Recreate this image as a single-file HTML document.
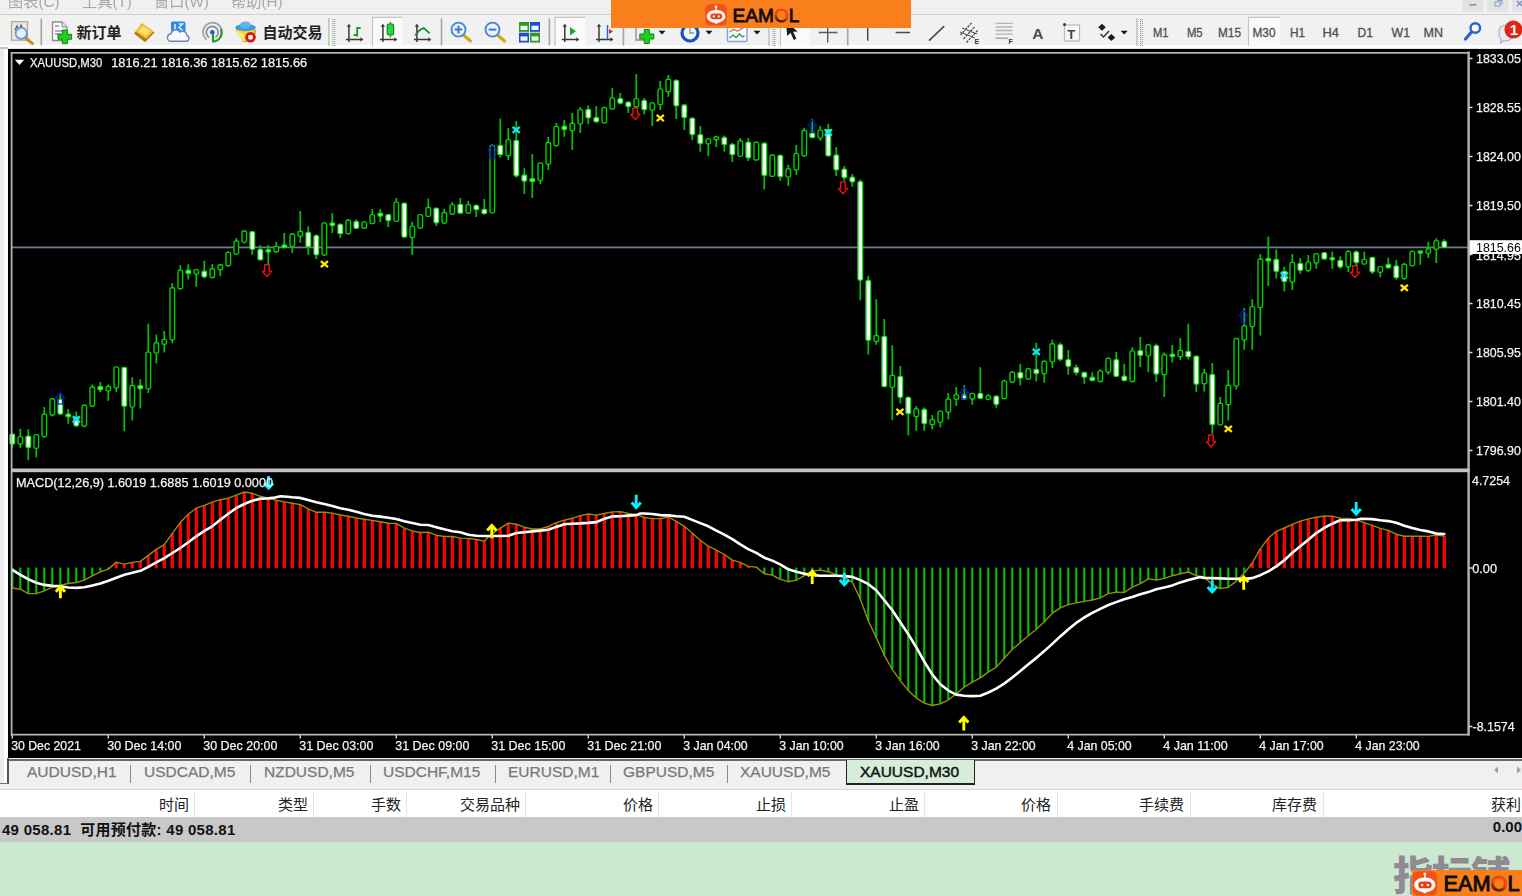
<!DOCTYPE html>
<html lang="zh"><head><meta charset="utf-8"><title>XAUUSD,M30</title>
<style>
html,body{margin:0;padding:0;background:#f0f0f0;}
body{width:1522px;height:896px;overflow:hidden;font-family:"Liberation Sans","Noto Sans CJK SC",sans-serif;}
#app{position:relative;width:1522px;height:896px;overflow:hidden;background:#f0f0f0;}
.abs{position:absolute;}
.menu{position:absolute;top:-11.5px;font-size:15.2px;color:#a8a8a8;white-space:nowrap;filter:blur(.4px);}
.tb{position:absolute;top:13.5px;left:0;width:1522px;height:32px;background:#f1f1f1;border-top:1.5px solid #cfcfcf;}
.tbt{position:absolute;top:20.8px;font-size:15px;font-weight:bold;color:#222;white-space:nowrap;letter-spacing:0px;}
.tf{position:absolute;top:26px;font-size:11.5px;color:#444;white-space:nowrap;}
.sep{position:absolute;top:19px;width:1px;height:28px;background:#a9a9a9;}
.grip{position:absolute;top:19px;width:3px;height:28px;border-left:1px dotted #999;border-right:1px dotted #999;}
.tab{position:absolute;top:763px;font-size:15.5px;color:#787878;white-space:nowrap;-webkit-text-stroke:.25px #787878;}
.tsep{position:absolute;top:765px;width:1px;height:18px;background:#8a8a8a;}
.hd{position:absolute;top:792.5px;font-size:15px;color:#222;white-space:nowrap;text-align:right;}
.hsep{position:absolute;top:791px;width:1px;height:26px;background:#e4e4e4;}
</style></head><body><div id="app">

<!-- cropped menu bar -->
<div class="menu" style="left:8px">图表(C)</div>
<div class="menu" style="left:82px">工具(T)</div>
<div class="menu" style="left:154px">窗口(W)</div>
<div class="menu" style="left:231px">帮助(H)</div>
<div class="tb"></div>
<div class="abs" style="left:0;top:45px;width:1522px;height:4px;background:#fdfdfd"></div>
<svg class="abs" style="left:0;top:0" width="1522" height="49" viewBox="0 0 1522 49" font-family="Liberation Sans, sans-serif">
<rect x="372" y="17" width="30.5" height="29" fill="#fafafa"/><path d="M372.5 46V17.4H402.5" stroke="#c4c4c4" stroke-width="1.2" fill="none"/>
<rect x="554.5" y="17" width="31" height="29" fill="#fafafa"/><path d="M555 46V17.4H585.5" stroke="#c4c4c4" stroke-width="1.2" fill="none"/>
<rect x="780" y="17" width="29.5" height="29" fill="#fafafa"/><path d="M780.5 46V17.4H809.5" stroke="#c4c4c4" stroke-width="1.2" fill="none"/>
<rect x="1248" y="17" width="32" height="29" fill="#fafafa"/><path d="M1248.5 46V17.4H1280" stroke="#c4c4c4" stroke-width="1.2" fill="none"/>
<rect x="40.5" y="18.5" width="1.6" height="27" fill="#a6a6a6"/>
<rect x="440.7" y="18.5" width="1.6" height="27" fill="#a6a6a6"/>
<rect x="548.6" y="18.5" width="1.6" height="27" fill="#a6a6a6"/>
<rect x="622.6" y="18.5" width="1.6" height="27" fill="#a6a6a6"/>
<rect x="846.9" y="18.5" width="1.6" height="27" fill="#a6a6a6"/>
<path d="M332.9 19V46M334.7 19V46" stroke="#8e8e8e" stroke-width="1" stroke-dasharray="1 1" fill="none"/>
<path d="M773 19V46M774.8 19V46" stroke="#8e8e8e" stroke-width="1" stroke-dasharray="1 1" fill="none"/>
<path d="M1140.5 19V46M1142.3 19V46" stroke="#8e8e8e" stroke-width="1" stroke-dasharray="1 1" fill="none"/>
<rect x="328.4" y="18" width="1" height="28" fill="#9db09d"/>
<rect x="768.5" y="18" width="1" height="28" fill="#9db09d"/>
<rect x="1136.5" y="18" width="1" height="28" fill="#9db09d"/>
<rect x="11.5" y="21.7" width="16" height="18.5" fill="#efe8dc" stroke="#b5a58f" stroke-width="1.2"/>
<path d="M15 30l2-4 2 5 2-6 2 4" stroke="#4a5d80" stroke-width="1.2" fill="none"/>
<path d="M25.5 38l7 5.6" stroke="#c98d1e" stroke-width="3" stroke-linecap="round"/>
<circle cx="21.2" cy="33.3" r="5.6" fill="#e6f0fc" fill-opacity=".85" stroke="#6a9bdc" stroke-width="1.8"/>
<path d="M52.5 22h9.5l5 5v13.5h-14.5z" fill="#fdfdfd" stroke="#8a8a8a" stroke-width="1.3"/><path d="M62 22v5h5" fill="#e0e0e0" stroke="#8a8a8a" stroke-width="1"/>
<path d="M55 26h4M55 31h8M55 34h6" stroke="#9a8fa8" stroke-width="1.3"/>
<path d="M62.3 30v4.3H58v5h4.3v4.3h5V39.3h4.3v-5H67.3V30z" fill="#1fd01f" stroke="#0a8a0a" stroke-width="1"/>
<path d="M134 33.5L142 23.3L154.6 32.6L145 42.3Z" fill="#b87c14"/>
<path d="M135.6 31.6L142.3 23.6L153.6 31.3L146.2 38.6Z" fill="#f6c62c"/>
<path d="M138.8 31.2L142.8 26.4L150 31.3L145.8 35.6Z" fill="#fde37c"/>
<rect x="171" y="21.5" width="14.5" height="12" rx="1.5" fill="#2d8ae6"/><path d="M175 24v7M179 24h3.5l-3.5 3.5 4 3.5" stroke="#d8ecff" stroke-width="1.6" fill="none"/>
<path d="M170.5 41.3a3.8 3.8 0 0 1 .4-7.5 5 5 0 0 1 9-1.8 4.5 4.5 0 0 1 7 3.5 3 3 0 0 1-.6 5.8z" fill="#f8fafd" stroke="#6d86b3" stroke-width="1.4"/>
<g fill="none" stroke-linecap="round"><path d="M206 39a9.5 9.5 0 1 1 12.5 .5" stroke="#9aa2ae" stroke-width="1.7"/><path d="M208.5 37a6 6 0 1 1 7.5 0" stroke="#7f8a9a" stroke-width="1.7"/><path d="M213 33v8.5" stroke="#18a018" stroke-width="2.2"/><path d="M214 41.5a9 9 0 0 0 7-12" stroke="#2a9a3a" stroke-width="2"/></g><circle cx="212.3" cy="32.2" r="2.3" fill="#2a5ad8"/>
<path d="M236 30l10-3 10 3.5-3 9-9 2.5z" fill="#f7d428" stroke="#c49a10" stroke-width="1"/><path d="M236 30l8 4 1 8-6-5z" fill="#fbe870"/>
<ellipse cx="245.5" cy="27.5" rx="10.3" ry="3.6" fill="#3f9be0"/><ellipse cx="245.5" cy="25" rx="5.5" ry="3.6" fill="#5db4ee"/>
<circle cx="250.5" cy="37.2" r="5.3" fill="#d01616"/><rect x="248.3" y="35" width="4.4" height="4.4" rx=".8" fill="#fff"/>
<path d="M348.9 25V42M345.9 39.5H361.4" stroke="#3a3a3a" stroke-width="1.5" fill="none"/><path d="M348.9 23.8l-2.2 3h4.4zM363.4 39.5l-3-2.2v4.4z" fill="#3a3a3a"/>
<path d="M357.2 27V36.5M357.2 28h3.5M353.7 35h3.5" stroke="#1c9a2c" stroke-width="1.9" fill="none"/>
<path d="M382.9 25V42M379.9 39.5H395.4" stroke="#3a3a3a" stroke-width="1.5" fill="none"/><path d="M382.9 23.8l-2.2 3h4.4zM397.4 39.5l-3-2.2v4.4z" fill="#3a3a3a"/>
<path d="M390.4 21.8V37.5" stroke="#1c9a2c" stroke-width="1.4"/><rect x="387.2" y="24" width="6.4" height="11" rx="1.5" fill="#2fd23f" stroke="#128a22" stroke-width="1.2"/>
<path d="M416.9 25V42M413.9 39.5H429.4" stroke="#3a3a3a" stroke-width="1.5" fill="none"/><path d="M416.9 23.8l-2.2 3h4.4zM431.4 39.5l-3-2.2v4.4z" fill="#3a3a3a"/>
<path d="M415.4 35.7Q418 30 423.7 28.1L429.7 33.4" stroke="#1c8a2c" stroke-width="1.8" fill="none"/>
<path d="M464 35.5l6.5 5.5" stroke="#d9a520" stroke-width="3.2" stroke-linecap="round"/>
<circle cx="458.5" cy="29.6" r="7" fill="#eaf3fd" stroke="#4c86d4" stroke-width="1.9"/>
<path d="M454.7 29.6H462.3 M458.5 25.8V33.4" stroke="#3a76cc" stroke-width="2" fill="none"/>
<path d="M498 35.5l6.5 5.5" stroke="#d9a520" stroke-width="3.2" stroke-linecap="round"/>
<circle cx="492.5" cy="29.6" r="7" fill="#eaf3fd" stroke="#4c86d4" stroke-width="1.9"/>
<path d="M488.7 29.6H496.3" stroke="#3a76cc" stroke-width="2" fill="none"/>
<rect x="519" y="22" width="10" height="9.8" fill="#2a9a1a"/><rect x="520.5" y="25.7" width="7" height="4.3" fill="#f4f8ff"/>
<rect x="530" y="22" width="10" height="9.8" fill="#1a4ed0"/><rect x="531.5" y="25.7" width="7" height="4.3" fill="#f4f8ff"/>
<rect x="519" y="32.7" width="10" height="9.8" fill="#1a4ed0"/><rect x="520.5" y="36.4" width="7" height="4.3" fill="#f4f8ff"/>
<rect x="530" y="32.7" width="10" height="9.8" fill="#2a9a1a"/><rect x="531.5" y="36.4" width="7" height="4.3" fill="#f4f8ff"/>
<path d="M564.8 25V42M561.8 39.5H577.3" stroke="#3a3a3a" stroke-width="1.5" fill="none"/><path d="M564.8 23.8l-2.2 3h4.4zM579.3 39.5l-3-2.2v4.4z" fill="#3a3a3a"/>
<path d="M570 27v8.6l6-4.3z" fill="#22a82e"/>
<path d="M599 25V42M596 39.5H611.5" stroke="#3a3a3a" stroke-width="1.5" fill="none"/><path d="M599 23.8l-2.2 3h4.4zM613.5 39.5l-3-2.2v4.4z" fill="#3a3a3a"/>
<path d="M607.5 25V39" stroke="#2a6ad0" stroke-width="1.5"/><path d="M613 31.4l-4-2.5v5z" fill="#d02a1a"/>
<path d="M636 28v12h8" stroke="#8a8a8a" stroke-width="1.3" fill="none"/>
<path d="M644.3 29.5v4.5H639.8v5h4.5v4.5h5V39h4.5v-5H649.3V29.5z" fill="#1fd01f" stroke="#0a8a0a" stroke-width="1"/>
<circle cx="690" cy="33" r="8" fill="#f4f8ff" stroke="#1c4fc0" stroke-width="3.2"/><path d="M690 27v6h4" stroke="#8a8a8a" stroke-width="1.3" fill="none"/>
<rect x="727.5" y="24" width="19.5" height="17.5" rx="1.5" fill="#f6f9ff" stroke="#86a4e0" stroke-width="1.5"/><path d="M729.5 32l4-2.5 4 1.5 7-4" stroke="#d06a4a" stroke-width="1.2" fill="none"/><path d="M729.5 38l3.5-3 3 2.5 3.5-3.5 3 3 2-1.5" stroke="#2a9a3a" stroke-width="1.3" fill="none"/>
<path d="M658.5 30.8h7l-3.5 3.8z" fill="#111"/>
<path d="M705.5 30.8h7l-3.5 3.8z" fill="#111"/>
<path d="M753.5 30.8h7l-3.5 3.8z" fill="#111"/>
<path d="M1120.7 30.8h7l-3.5 3.8z" fill="#111"/>
<path d="M785.8 21.5l1.5 14.5 3.2-3.2 3.3 7.2 2.6-1.2-3.3-7 4.5-.3z" fill="#1a1a1a"/>
<path d="M818.7 32.5H837.5M827.7 23V42.5" stroke="#5a5a5a" stroke-width="1.4"/>
<path d="M867.7 23V40.7M895.6 32.5H910" stroke="#4a4a4a" stroke-width="1.5"/>
<path d="M929 40.7L944.2 26.2" stroke="#4a4a4a" stroke-width="1.6"/>
<path d="M960.5 35l11-12M963.5 39l11-12M966.5 42.5l11-12" stroke="#4a4a4a" stroke-width="1.3" stroke-dasharray="2.5 1"/><path d="M960 32l15 6M962 28l15 6" stroke="#4a4a4a" stroke-width="1"/>
<text x="974.5" y="43.5" font-size="7px" font-weight="bold" fill="#333">E</text>
<path d="M995.5 23.3H1012.6M995.5 27H1012.6M995.5 30.5H1012.6M995.5 34.2H1012.6" stroke="#b4b4b4" stroke-width="1.3"/><path d="M995.5 38.2H1008" stroke="#9a9a9a" stroke-width="1.3"/>
<text x="1008.5" y="44" font-size="7px" font-weight="bold" fill="#333">F</text>
<text x="1032.3" y="38.5" font-size="15.5px" font-weight="bold" fill="#4a4a4a">A</text>
<rect x="1064.5" y="25" width="15" height="16" fill="#f8f8f8" stroke="#b8b8b8" stroke-width="1.2"/><circle cx="1064.5" cy="24.5" r="1.5" fill="#333"/>
<text x="1067.3" y="38.5" font-size="13px" font-weight="bold" fill="#444">T</text>
<path d="M1102 23.8l3.8 3.5-3.8 3.5-3.8-3.5zM1111.4 34l3.8 3.5-3.8 3.5-3.8-3.5z" fill="#1a1a1a"/><path d="M1100.5 34l3 3 5.5-6" stroke="#333" stroke-width="1.4" fill="none"/>
<text x="1153" y="36.9" font-size="12px" fill="#505050" stroke="#505050" stroke-width=".3" textLength="15.6" lengthAdjust="spacingAndGlyphs">M1</text>
<text x="1187" y="36.9" font-size="12px" fill="#505050" stroke="#505050" stroke-width=".3" textLength="15.6" lengthAdjust="spacingAndGlyphs">M5</text>
<text x="1218" y="36.9" font-size="12px" fill="#505050" stroke="#505050" stroke-width=".3" textLength="23" lengthAdjust="spacingAndGlyphs">M15</text>
<text x="1252.5" y="36.9" font-size="12px" fill="#505050" stroke="#505050" stroke-width=".3" textLength="23" lengthAdjust="spacingAndGlyphs">M30</text>
<text x="1290" y="36.9" font-size="12px" fill="#505050" stroke="#505050" stroke-width=".3" textLength="15" lengthAdjust="spacingAndGlyphs">H1</text>
<text x="1322.5" y="36.9" font-size="12px" fill="#505050" stroke="#505050" stroke-width=".3" textLength="16.5" lengthAdjust="spacingAndGlyphs">H4</text>
<text x="1357.5" y="36.9" font-size="12px" fill="#505050" stroke="#505050" stroke-width=".3" textLength="15.5" lengthAdjust="spacingAndGlyphs">D1</text>
<text x="1391.5" y="36.9" font-size="12px" fill="#505050" stroke="#505050" stroke-width=".3" textLength="18.5" lengthAdjust="spacingAndGlyphs">W1</text>
<text x="1423.5" y="36.9" font-size="12px" fill="#505050" stroke="#505050" stroke-width=".3" textLength="19.5" lengthAdjust="spacingAndGlyphs">MN</text>
<path d="M1471.5 32l-6 7" stroke="#2a62d2" stroke-width="3.2" stroke-linecap="round"/><circle cx="1475.3" cy="28" r="4.8" fill="#fdfdff" stroke="#2a62d2" stroke-width="2.4"/>
<path d="M1499 31a7 6 0 0 1 14 0v4a7 6 0 0 1-9 5.5l-3.5 2.5 .5-4a7 6 0 0 1-2-4z" fill="#e4ecf8" stroke="#aab4c8" stroke-width="1.2"/>
<circle cx="1513.4" cy="29.6" r="9" fill="#e22416"/><text x="1509.8" y="35" font-size="15px" font-weight="bold" fill="#fff">1</text>
<rect x="1462" y="0" width="21.5" height="12" fill="#e3e3e3"/><rect x="1487" y="0" width="21.5" height="12" fill="#e3e3e3"/><rect x="1512" y="0" width="10" height="12" fill="#e3e3e3"/>
<path d="M1469.5 4.8h7" stroke="#6f90c8" stroke-width="1.6"/><path d="M1495 2h5v4h-5zM1497 0.5h5v4" stroke="#8aa0c8" stroke-width="1.1" fill="none"/><path d="M1517 1l5 5M1522 1l-5 5" stroke="#6f90c8" stroke-width="1.4"/>
</svg>
<div class="tbt" style="left:76.5px">新订单</div>
<div class="tbt" style="left:262.5px">自动交易</div>
<!-- top orange brand bar -->
<svg class="abs" style="left:611px;top:0" width="300" height="28" viewBox="611 0 300 28"><rect x="611" y="0" width="300" height="28" fill="#f97e1c"/><g transform="translate(705.3 4.3)"><g><rect x="0" y="0" width="21.7" height="21.3" rx="5" fill="#f4501a"/><circle cx="10.8" cy="2.5" r="1.25" fill="#fff"/><rect x="10.2" y="3" width="1.2" height="3.5" fill="#fff"/><path d="M10.8 5.6C16.5 5.6 20.1 8.6 20.1 11.9C20.1 15 17 17.6 13.3 18.1L10.8 19.6L8.3 18.1C4.6 17.6 1.5 15 1.5 11.9C1.5 8.6 5.1 5.6 10.8 5.6Z" fill="#fff"/><rect x="5.1" y="9.1" width="11.8" height="5.9" rx="2.95" fill="#f23a12"/><circle cx="8.5" cy="12.1" r="1.1" fill="#fff"/><circle cx="13.5" cy="12.1" r="1.1" fill="#fff"/><defs><linearGradient id="lg1" x1="0" y1="1" x2="1" y2="0"><stop offset="0" stop-color="#111"/><stop offset=".45" stop-color="#3a1404"/><stop offset=".6" stop-color="#e8480c"/><stop offset="1" stop-color="#f0560e"/></linearGradient></defs><text x="27.3" y="17.4" font-size="19px" fill="#0d0d0d" stroke="#0d0d0d" stroke-width=".8" textLength="66.8" lengthAdjust="spacingAndGlyphs" font-family="Liberation Sans, sans-serif">EAM<tspan fill="url(#lg1)" stroke="url(#lg1)">O</tspan>L</text></g></g></svg>

<svg class="abs" style="left:8px;top:48px;filter:blur(.3px)" width="1514" height="710" viewBox="8 48 1514 710" font-family="Liberation Sans, sans-serif">
<rect x="8" y="48.9" width="1514" height="709.1" fill="#000"/>
<rect x="12" y="246.5" width="1457" height="1.8" fill="#68798c"/>
<path d="M264.7 264.8H269.3V271.2H271.6L267 276.5L262.4 271.2H264.7Z" stroke="#e01010" stroke-width="1.5" fill="none" stroke-linejoin="round"/>
<path d="M633 107.9H637.6V114.3H639.9L635.3 119.5L630.7 114.3H633Z" stroke="#e01010" stroke-width="1.5" fill="none" stroke-linejoin="round"/>
<path d="M840.7 182H845.3V188.5H847.6L843 193.8L838.4 188.5H840.7Z" stroke="#e01010" stroke-width="1.5" fill="none" stroke-linejoin="round"/>
<path d="M1208.7 435H1213.3V441.6H1215.6L1211 447L1206.4 441.6H1208.7Z" stroke="#e01010" stroke-width="1.5" fill="none" stroke-linejoin="round"/>
<path d="M1352.7 265.8H1357.3V272.3H1359.6L1355 277.6L1350.4 272.3H1352.7Z" stroke="#e01010" stroke-width="1.5" fill="none" stroke-linejoin="round"/>
<path d="M321.7 261.8L327.1 266.4M321.7 266.4L327.1 261.8" stroke="#ffea00" stroke-width="2.3" stroke-linecap="square" fill="none"/>
<path d="M657.6 115.7L663 120.3M657.6 120.3L663 115.7" stroke="#ffea00" stroke-width="2.3" stroke-linecap="square" fill="none"/>
<path d="M897.2 409.6L902.6 414.2M897.2 414.2L902.6 409.6" stroke="#ffea00" stroke-width="2.3" stroke-linecap="square" fill="none"/>
<path d="M1225.6 426.6L1231 431.2M1225.6 431.2L1231 426.6" stroke="#ffea00" stroke-width="2.3" stroke-linecap="square" fill="none"/>
<path d="M1401.6 285.5L1407 290.1M1401.6 290.1L1407 285.5" stroke="#ffea00" stroke-width="2.3" stroke-linecap="square" fill="none"/>
<path d="M12.3 432.9V434.2M12.3 444V447.7M20.3 428.8V436.6M20.3 444V447.7M28.3 429.2V436.1M28.3 447.7V459.9M36.3 434.2V434.6M36.3 448.4V457.5M44.3 407.1V414M44.3 436.6V437.8M52.3 398.1V398.8M52.3 415V416.5M60.3 392.9V399.3M60.3 414V415M68.3 409.1V414M68.3 417V423.8M76.3 411.6V417M76.3 425.8V426.8M84.3 404.7V405.2M84.3 426.3V427.3M92.3 384.6V387M92.3 406.2V407.1M100.3 382.1V386.5M100.3 390V391.9M108.3 384.6V386.5M108.3 390.9V400.8M116.3 366.4V366.9M116.3 388V391.9M124.3 366.9V367.4M124.3 406.2V431.2M132.3 377.2V385.5M132.3 407.1V420.6M140.3 379.2V385.5M140.3 389V408.6M148.3 323.7V352.1M148.3 389V392.9M156.3 334.5V342.8M156.3 353.1V363.4M164.3 331V339.4M164.3 344.3V352.6M172.3 282.9V287.8M172.3 339.9V343.3M180.3 265.2V270.1M180.3 288.8V289.3M188.3 264.2V270.1M188.3 273.6V279.5M196.3 268.7V269.6M196.3 274.1V286.8M204.3 260.8V271.2M204.3 276.9V278.2M212.3 264.1V268.8M212.3 277.5V278.5M220.3 264.1V264.8M220.3 269.8V275.9M228.3 251.2V252.4M228.3 265.8V266.5M236.3 238V241M236.3 254.1V254.8M244.3 230.3V231M244.3 242.4V243.4M252.3 231V231.7M252.3 249.4V255.1M260.3 245V249.4M260.3 259.8V260.5M268.3 245V249.7M268.3 252.1V264.1M276.3 242V246.4M276.3 251.7V252.4M284.3 233V245M284.3 247.7V248.1M292.3 233V234M292.3 246.4V253.1M300.3 210.9V231.3M300.3 236.3V242.7M308.3 226.3V232.3M308.3 246.7V254.8M316.3 234.3V235.7M316.3 254.8V259.1M324.3 222.3V222.9M324.3 255.1V255.8M332.3 213.2V222.9M332.3 225.6V233M340.3 223.6V224.3M340.3 233.7V238M348.3 218.9V220.3M348.3 233.7V234.3M356.3 219.3V221.6M356.3 228.3V229M364.3 221.3V221.9M364.3 228.3V228.6M372.3 208.9V214.6M372.3 223.6V224.3M380.3 208.9V213.2M380.3 216.3V221.9M388.3 213.9V214.6M388.3 220.6V227M396.3 197.9V202.1M396.3 221.4V221.8M404.3 202.9V203.2M404.3 237.1V237.5M412.3 221.8V226.1M412.3 237.5V255M420.3 214.3V214.6M420.3 228.2V228.6M428.3 198.6V207.5M428.3 216.4V216.8M436.3 207.9V208.2M436.3 222.9V226.1M444.3 208.9V212.5M444.3 223.2V223.6M452.3 202.1V204.6M452.3 214.3V214.6M460.3 197.9V204.3M460.3 213.2V213.6M468.3 201.1V204.6M468.3 213.2V213.6M476.3 204.6V205.4M476.3 209.6V217.1M484.3 198.9V209.3M484.3 213.6V214.6M492.3 143.9V145.4M492.3 212.9V213.2M500.3 118.6V145.4M500.3 154.6V157.5M508.3 127.9V139.6M508.3 155.7V160M516.3 121.1V140.4M516.3 175.7V177.5M524.3 168.2V175M524.3 181.1V193.9M532.3 153.9V178.6M532.3 181.4V197.9M540.3 162.5V162.9M540.3 180.4V183.9M548.3 137.1V142.5M548.3 164.3V170M556.3 122.9V126.4M556.3 145.7V146.1M564.3 120V126.1M564.3 129.6V136.8M572.3 112.9V123.2M572.3 130.7V150M580.3 107.1V109.6M580.3 123.9V132.9M588.3 105.4V109.3M588.3 117.9V123.9M596.3 106.1V117.5M596.3 121.8V122.5M604.3 107.1V107.5M604.3 122.9V123.6M612.3 87.9V97.9M612.3 108.9V109.3M620.3 92.9V98.6M620.3 103.2V104.6M628.3 101.4V102.1M628.3 106.8V112.9M636.3 73.9V98.6M636.3 106.8V107.5M644.3 97.9V100.4M644.3 109.6V114.6M652.3 102.1V102.9M652.3 110V126.1M660.3 81.1V88.9M660.3 104.6V110M668.3 75V79.3M668.3 91.8V96.8M676.3 79.6V80.4M676.3 105.7V118.9M684.3 104.6V105M684.3 117.5V130M692.3 117.5V118.2M692.3 134.6V140M700.3 126.1V134.6M700.3 143.6V151.8M708.3 138.2V138.9M708.3 143.9V156.1M716.3 135.7V136.8M716.3 139.6V147.1M724.3 135.4V137.5M724.3 144.6V151.8M732.3 142.9V144.3M732.3 154.6V162.1M740.3 137.9V140.7M740.3 156.4V156.8M748.3 137.9V142.1M748.3 157.9V161.1M756.3 141.4V142.1M756.3 160V160.4M764.3 142.5V143.2M764.3 175.4V189.6M772.3 154.6V155M772.3 176.4V176.8M780.3 154.6V155.4M780.3 176.7V180.8M788.3 164.7V168.7M788.3 177.1V186M796.3 145V153.4M796.3 169.9V174.7M804.3 127.7V130.5M804.3 155.8V156.6M812.3 118.8V132.5M812.3 137.7V138.1M820.3 126.1V130.1M820.3 138.1V141M828.3 124.1V129.7M828.3 155.8V156.6M836.3 147V155M836.3 169.9V175.9M844.3 165.9V169.1M844.3 177.5V180.8M852.3 173.9V177.1M852.3 182V186.8M860.3 179.5V181.6M860.3 280.1V300.2M868.3 276V280.5M868.3 340.4V354.4M876.3 299.3V335.5M876.3 341.6V344.8M884.3 319V336.3M884.3 386.6V387M892.3 345.2V375.3M892.3 387.4V419.9M900.3 366.1V376.5M900.3 397.4V403.5M908.3 396.6V397.4M908.3 413.5V435.6M916.3 405.9V408.7M916.3 416.7V430.8M924.3 407.5V409.5M924.3 423.6V430.8M932.3 415.1V419.5M932.3 424.8V429.6M940.3 410.7V411.1M940.3 422.4V427.6M948.3 393V399M948.3 412.3V419.5M956.3 387V394.6M956.3 399.4V405.9M964.3 385V395M964.3 399.4V399.8M972.3 393V393.4M972.3 399V404.7M980.3 367.2V393.4M980.3 398.4V398.8M988.3 394.1V395.6M988.3 399.4V400.3M996.3 395.3V396.2M996.3 404.4V407.8M1004.3 379.7V380.9M1004.3 398.8V399.1M1012.3 371.2V372.2M1012.3 382.2V383.1M1020.3 364.1V372.5M1020.3 378.1V385.6M1028.3 367.8V368.8M1028.3 379.1V380M1036.3 342.8V369.4M1036.3 373.4V381.6M1044.3 360.6V361.2M1044.3 373.8V382.8M1052.3 339.7V343.8M1052.3 361.9V367.8M1060.3 342.5V344.7M1060.3 359.4V361.2M1068.3 350V359.7M1068.3 366.2V374.7M1076.3 364.4V367.5M1076.3 372.5V375.6M1084.3 371.9V372.5M1084.3 377.2V383.8M1092.3 372.2V377.2M1092.3 380.6V380.9M1100.3 369.4V370.9M1100.3 381.6V382.5M1108.3 357.5V358.1M1108.3 372.2V374.7M1116.3 351.9V359.7M1116.3 376.2V376.6M1124.3 364.1V376.2M1124.3 380.6V380.9M1132.3 347.2V350.9M1132.3 381.6V382.5M1140.3 336.9V350.6M1140.3 355.3V366.9M1148.3 344.1V344.7M1148.3 355.9V371.9M1156.3 343.4V345.6M1156.3 374.1V381.9M1164.3 352.3V354.7M1164.3 374.9V397M1172.3 344.9V354.2M1172.3 356.7V362.6M1180.3 338V350.3M1180.3 356.7V360.1M1188.3 323.8V351.3M1188.3 356.7V359.6M1196.3 355.7V356.2M1196.3 384.2V392.1M1204.3 369V372.9M1204.3 383.7V391.6M1212.3 363.1V374.4M1212.3 424.5V433.8M1220.3 397V403.3M1220.3 425V425.4M1228.3 370V385.2M1228.3 404.8V420.5M1236.3 338V338.5M1236.3 386.2V389.6M1244.3 308.1V325.8M1244.3 340V349.8M1252.3 299.2V306.6M1252.3 326.7V349.8M1260.3 254.1V259M1260.3 307.6V335.6M1268.3 236.4V258.5M1268.3 260.9V286M1276.3 249.6V259.5M1276.3 271.3V278.6M1284.3 266.8V271.3M1284.3 281.6V291.4M1292.3 254.1V262.4M1292.3 282.1V289.9M1300.3 258V263.4M1300.3 270.3V273.7M1308.3 255V261.9M1308.3 270.8V271.7M1316.3 252.9V253.6M1316.3 263V268.8M1324.3 252.3V252.7M1324.3 259V259.6M1332.3 251.8V257.7M1332.3 259.9V268.8M1340.3 256.3V260.3M1340.3 267V268.8M1348.3 250V251.4M1348.3 266.8V271.9M1356.3 250.5V251.8M1356.3 262.5V265.2M1364.3 251.8V259.4M1364.3 264.1V264.5M1372.3 256.9V257.4M1372.3 271.9V273.7M1380.3 265.9V266.6M1380.3 272.4V277.3M1388.3 257.8V264.3M1388.3 267.9V268.6M1396.3 260.1V265.9M1396.3 277.7V279.7M1404.3 263V264.3M1404.3 278.6V279.7M1412.3 250.5V251.4M1412.3 265.9V266.3M1420.3 250.9V251M1420.3 253.2V264.8M1428.3 242V248.7M1428.3 253.4V258.1M1436.3 238.2V240.6M1436.3 249.3V263M1444.3 239.3V241.3M1444.3 247.3V247.8" stroke="#00c400" stroke-width="1.75" fill="none"/>
<g stroke="#00d200" stroke-width="1.4" fill="#000"><rect x="18" y="436.6" width="4.6" height="7.4" rx="1.6"/><rect x="34" y="434.6" width="4.6" height="13.8" rx="1.6"/><rect x="42" y="414" width="4.6" height="22.6" rx="1.6"/><rect x="50" y="398.8" width="4.6" height="16.2" rx="1.6"/><rect x="82" y="405.2" width="4.6" height="21.1" rx="1.6"/><rect x="90" y="387" width="4.6" height="19.2" rx="1.6"/><rect x="106" y="386.5" width="4.6" height="4.4" rx="1.6"/><rect x="114" y="366.9" width="4.6" height="21.1" rx="1.6"/><rect x="130" y="385.5" width="4.6" height="21.6" rx="1.6"/><rect x="146" y="352.1" width="4.6" height="36.8" rx="1.6"/><rect x="154" y="342.8" width="4.6" height="10.3" rx="1.6"/><rect x="162" y="339.4" width="4.6" height="4.9" rx="1.6"/><rect x="170" y="287.8" width="4.6" height="52.1" rx="1.6"/><rect x="178" y="270.1" width="4.6" height="18.7" rx="1.6"/><rect x="194" y="269.6" width="4.6" height="4.4" rx="1.6"/><rect x="210" y="268.8" width="4.6" height="8.7" rx="1.6"/><rect x="218" y="264.8" width="4.6" height="5" rx="1.6"/><rect x="226" y="252.4" width="4.6" height="13.4" rx="1.6"/><rect x="234" y="241" width="4.6" height="13.1" rx="1.6"/><rect x="242" y="231" width="4.6" height="11.4" rx="1.6"/><rect x="274" y="246.4" width="4.6" height="5.4" rx="1.6"/><rect x="290" y="234" width="4.6" height="12.4" rx="1.6"/><rect x="298" y="231.3" width="4.6" height="5" rx="1.6"/><rect x="322" y="222.9" width="4.6" height="32.1" rx="1.6"/><rect x="346" y="220.3" width="4.6" height="13.4" rx="1.6"/><rect x="362" y="221.9" width="4.6" height="6.4" rx="1.6"/><rect x="370" y="214.6" width="4.6" height="9" rx="1.6"/><rect x="394" y="202.1" width="4.6" height="19.3" rx="1.6"/><rect x="410" y="226.1" width="4.6" height="11.4" rx="1.6"/><rect x="418" y="214.6" width="4.6" height="13.6" rx="1.6"/><rect x="426" y="207.5" width="4.6" height="8.9" rx="1.6"/><rect x="442" y="212.5" width="4.6" height="10.7" rx="1.6"/><rect x="450" y="204.6" width="4.6" height="9.6" rx="1.6"/><rect x="466" y="204.6" width="4.6" height="8.6" rx="1.6"/><rect x="490" y="145.4" width="4.6" height="67.5" rx="1.6"/><rect x="506" y="139.6" width="4.6" height="16.1" rx="1.6"/><rect x="538" y="162.9" width="4.6" height="17.5" rx="1.6"/><rect x="546" y="142.5" width="4.6" height="21.8" rx="1.6"/><rect x="554" y="126.4" width="4.6" height="19.3" rx="1.6"/><rect x="570" y="123.2" width="4.6" height="7.5" rx="1.6"/><rect x="578" y="109.6" width="4.6" height="14.3" rx="1.6"/><rect x="602" y="107.5" width="4.6" height="15.4" rx="1.6"/><rect x="610" y="97.9" width="4.6" height="11.1" rx="1.6"/><rect x="634" y="98.6" width="4.6" height="8.2" rx="1.6"/><rect x="650" y="102.9" width="4.6" height="7.1" rx="1.6"/><rect x="658" y="88.9" width="4.6" height="15.7" rx="1.6"/><rect x="666" y="79.3" width="4.6" height="12.5" rx="1.6"/><rect x="706" y="138.9" width="4.6" height="5" rx="1.6"/><rect x="714" y="136.8" width="4.6" height="2.9" rx="1.6"/><rect x="738" y="140.7" width="4.6" height="15.7" rx="1.6"/><rect x="754" y="142.1" width="4.6" height="17.9" rx="1.6"/><rect x="770" y="155" width="4.6" height="21.4" rx="1.6"/><rect x="786" y="168.7" width="4.6" height="8.4" rx="1.6"/><rect x="794" y="153.4" width="4.6" height="16.5" rx="1.6"/><rect x="802" y="130.5" width="4.6" height="25.3" rx="1.6"/><rect x="818" y="130.1" width="4.6" height="8" rx="1.6"/><rect x="874" y="335.5" width="4.6" height="6" rx="1.6"/><rect x="890" y="375.3" width="4.6" height="12.1" rx="1.6"/><rect x="914" y="408.7" width="4.6" height="8" rx="1.6"/><rect x="930" y="419.5" width="4.6" height="5.2" rx="1.6"/><rect x="938" y="411.1" width="4.6" height="11.3" rx="1.6"/><rect x="946" y="399" width="4.6" height="13.3" rx="1.6"/><rect x="954" y="394.6" width="4.6" height="4.8" rx="1.6"/><rect x="970" y="393.4" width="4.6" height="5.6" rx="1.6"/><rect x="986" y="395.6" width="4.6" height="3.8" rx="1.6"/><rect x="1002" y="380.9" width="4.6" height="17.8" rx="1.6"/><rect x="1010" y="372.2" width="4.6" height="10" rx="1.6"/><rect x="1026" y="368.8" width="4.6" height="10.3" rx="1.6"/><rect x="1042" y="361.2" width="4.6" height="12.5" rx="1.6"/><rect x="1050" y="343.8" width="4.6" height="18.1" rx="1.6"/><rect x="1098" y="370.9" width="4.6" height="10.6" rx="1.6"/><rect x="1106" y="358.1" width="4.6" height="14.1" rx="1.6"/><rect x="1130" y="350.9" width="4.6" height="30.6" rx="1.6"/><rect x="1146" y="344.7" width="4.6" height="11.2" rx="1.6"/><rect x="1162" y="354.7" width="4.6" height="20.1" rx="1.6"/><rect x="1178" y="350.3" width="4.6" height="6.4" rx="1.6"/><rect x="1202" y="372.9" width="4.6" height="10.8" rx="1.6"/><rect x="1218" y="403.3" width="4.6" height="21.6" rx="1.6"/><rect x="1226" y="385.2" width="4.6" height="19.6" rx="1.6"/><rect x="1234" y="338.5" width="4.6" height="47.6" rx="1.6"/><rect x="1242" y="325.8" width="4.6" height="14.2" rx="1.6"/><rect x="1250" y="306.6" width="4.6" height="20.1" rx="1.6"/><rect x="1258" y="259" width="4.6" height="48.6" rx="1.6"/><rect x="1290" y="262.4" width="4.6" height="19.6" rx="1.6"/><rect x="1306" y="261.9" width="4.6" height="8.8" rx="1.6"/><rect x="1314" y="253.6" width="4.6" height="9.4" rx="1.6"/><rect x="1346" y="251.4" width="4.6" height="15.4" rx="1.6"/><rect x="1362" y="259.4" width="4.6" height="4.7" rx="1.6"/><rect x="1378" y="266.6" width="4.6" height="5.8" rx="1.6"/><rect x="1402" y="264.3" width="4.6" height="14.3" rx="1.6"/><rect x="1410" y="251.4" width="4.6" height="14.5" rx="1.6"/><rect x="1426" y="248.7" width="4.6" height="4.7" rx="1.6"/><rect x="1434" y="240.6" width="4.6" height="8.7" rx="1.6"/></g>
<g stroke="#19e619" stroke-width="1.3" fill="#fff"><rect x="10" y="434.2" width="4.6" height="9.8" rx="1.3"/><rect x="26" y="436.1" width="4.6" height="11.5" rx="1.3"/><rect x="58" y="399.3" width="4.6" height="14.7" rx="1.3"/><rect x="74" y="417" width="4.6" height="8.8" rx="1.3"/><rect x="122" y="367.4" width="4.6" height="38.8" rx="1.3"/><rect x="202" y="271.2" width="4.6" height="5.7" rx="1.3"/><rect x="250" y="231.7" width="4.6" height="17.7" rx="1.3"/><rect x="258" y="249.4" width="4.6" height="10.4" rx="1.3"/><rect x="306" y="232.3" width="4.6" height="14.4" rx="1.3"/><rect x="314" y="235.7" width="4.6" height="19.1" rx="1.3"/><rect x="338" y="224.3" width="4.6" height="9.4" rx="1.3"/><rect x="354" y="221.6" width="4.6" height="6.7" rx="1.3"/><rect x="386" y="214.6" width="4.6" height="6" rx="1.3"/><rect x="402" y="203.2" width="4.6" height="33.9" rx="1.3"/><rect x="434" y="208.2" width="4.6" height="14.6" rx="1.3"/><rect x="458" y="204.3" width="4.6" height="8.9" rx="1.3"/><rect x="474" y="205.4" width="4.6" height="4.3" rx="1.3"/><rect x="482" y="209.3" width="4.6" height="4.3" rx="1.3"/><rect x="498" y="145.4" width="4.6" height="9.3" rx="1.3"/><rect x="514" y="140.4" width="4.6" height="35.4" rx="1.3"/><rect x="522" y="175" width="4.6" height="6.1" rx="1.3"/><rect x="586" y="109.3" width="4.6" height="8.6" rx="1.3"/><rect x="594" y="117.5" width="4.6" height="4.3" rx="1.3"/><rect x="618" y="98.6" width="4.6" height="4.6" rx="1.3"/><rect x="626" y="102.1" width="4.6" height="4.6" rx="1.3"/><rect x="642" y="100.4" width="4.6" height="9.3" rx="1.3"/><rect x="674" y="80.4" width="4.6" height="25.4" rx="1.3"/><rect x="682" y="105" width="4.6" height="12.5" rx="1.3"/><rect x="690" y="118.2" width="4.6" height="16.4" rx="1.3"/><rect x="698" y="134.6" width="4.6" height="8.9" rx="1.3"/><rect x="722" y="137.5" width="4.6" height="7.1" rx="1.3"/><rect x="730" y="144.3" width="4.6" height="10.4" rx="1.3"/><rect x="746" y="142.1" width="4.6" height="15.7" rx="1.3"/><rect x="762" y="143.2" width="4.6" height="32.1" rx="1.3"/><rect x="778" y="155.4" width="4.6" height="21.3" rx="1.3"/><rect x="810" y="132.5" width="4.6" height="5.2" rx="1.3"/><rect x="826" y="129.7" width="4.6" height="26.1" rx="1.3"/><rect x="834" y="155" width="4.6" height="14.9" rx="1.3"/><rect x="842" y="169.1" width="4.6" height="8.4" rx="1.3"/><rect x="850" y="177.1" width="4.6" height="4.8" rx="1.3"/><rect x="858" y="181.6" width="4.6" height="98.5" rx="1.3"/><rect x="866" y="280.5" width="4.6" height="59.9" rx="1.3"/><rect x="882" y="336.3" width="4.6" height="50.3" rx="1.3"/><rect x="898" y="376.5" width="4.6" height="20.9" rx="1.3"/><rect x="906" y="397.4" width="4.6" height="16.1" rx="1.3"/><rect x="922" y="409.5" width="4.6" height="14.1" rx="1.3"/><rect x="962" y="395" width="4.6" height="4.4" rx="1.3"/><rect x="978" y="393.4" width="4.6" height="5" rx="1.3"/><rect x="994" y="396.2" width="4.6" height="8.1" rx="1.3"/><rect x="1018" y="372.5" width="4.6" height="5.6" rx="1.3"/><rect x="1034" y="369.4" width="4.6" height="4.1" rx="1.3"/><rect x="1058" y="344.7" width="4.6" height="14.7" rx="1.3"/><rect x="1066" y="359.7" width="4.6" height="6.6" rx="1.3"/><rect x="1074" y="367.5" width="4.6" height="5" rx="1.3"/><rect x="1082" y="372.5" width="4.6" height="4.7" rx="1.3"/><rect x="1114" y="359.7" width="4.6" height="16.6" rx="1.3"/><rect x="1122" y="376.2" width="4.6" height="4.4" rx="1.3"/><rect x="1138" y="350.6" width="4.6" height="4.7" rx="1.3"/><rect x="1154" y="345.6" width="4.6" height="28.4" rx="1.3"/><rect x="1186" y="351.3" width="4.6" height="5.4" rx="1.3"/><rect x="1194" y="356.2" width="4.6" height="28" rx="1.3"/><rect x="1210" y="374.4" width="4.6" height="50.1" rx="1.3"/><rect x="1274" y="259.5" width="4.6" height="11.8" rx="1.3"/><rect x="1282" y="271.3" width="4.6" height="10.3" rx="1.3"/><rect x="1298" y="263.4" width="4.6" height="6.9" rx="1.3"/><rect x="1322" y="252.7" width="4.6" height="6.3" rx="1.3"/><rect x="1338" y="260.3" width="4.6" height="6.7" rx="1.3"/><rect x="1354" y="251.8" width="4.6" height="10.7" rx="1.3"/><rect x="1370" y="257.4" width="4.6" height="14.5" rx="1.3"/><rect x="1394" y="265.9" width="4.6" height="11.8" rx="1.3"/><rect x="1442" y="241.3" width="4.6" height="6" rx="1.3"/></g>
<g stroke="#10dc10" stroke-width="1.3" fill="#8cf58c"><rect x="66" y="414" width="4.6" height="2.9" rx="1.1"/><rect x="98" y="386.5" width="4.6" height="3.4" rx="1.1"/><rect x="138" y="385.5" width="4.6" height="3.4" rx="1.1"/><rect x="186" y="270.1" width="4.6" height="3.4" rx="1.1"/><rect x="266" y="249.7" width="4.6" height="2.3" rx="1.1"/><rect x="282" y="245" width="4.6" height="2.7" rx="1.1"/><rect x="330" y="222.9" width="4.6" height="2.7" rx="1.1"/><rect x="378" y="213.2" width="4.6" height="3" rx="1.1"/><rect x="530" y="178.6" width="4.6" height="2.9" rx="1.1"/><rect x="562" y="126.1" width="4.6" height="3.6" rx="1.1"/><rect x="1090" y="377.2" width="4.6" height="3.4" rx="1.1"/><rect x="1170" y="354.2" width="4.6" height="2.5" rx="1.1"/><rect x="1266" y="258.5" width="4.6" height="2.5" rx="1.1"/><rect x="1330" y="257.7" width="4.6" height="2.2" rx="1.1"/><rect x="1386" y="264.3" width="4.6" height="3.6" rx="1.1"/><rect x="1418" y="251" width="4.6" height="2.2" rx="1.1"/></g>
<path d="M73.6 417.1L79 421.7M73.6 421.7L79 417.1" stroke="#10e8f0" stroke-width="2.3" stroke-linecap="square" fill="none"/>
<path d="M513.5 127.5L518.9 132.1M513.5 132.1L518.9 127.5" stroke="#10e8f0" stroke-width="2.3" stroke-linecap="square" fill="none"/>
<path d="M825.6 130.2L831 134.8M825.6 134.8L831 130.2" stroke="#10e8f0" stroke-width="2.3" stroke-linecap="square" fill="none"/>
<path d="M1033.6 349.6L1039 354.2M1033.6 354.2L1039 349.6" stroke="#10e8f0" stroke-width="2.3" stroke-linecap="square" fill="none"/>
<path d="M1281.6 273.1L1287 277.7M1281.6 277.7L1287 273.1" stroke="#10e8f0" stroke-width="2.3" stroke-linecap="square" fill="none"/>
<g opacity=".8"><path d="M58.1 404H62.5V397.9H64.7L60.3 393L55.9 397.9H58.1Z" stroke="#0a12d8" stroke-width="1.5" fill="none" stroke-linejoin="round"/></g>
<g opacity=".8"><path d="M490.1 158.2H494.5V150.9H496.7L492.3 145L487.9 150.9H490.1Z" stroke="#0a12d8" stroke-width="1.5" fill="none" stroke-linejoin="round"/></g>
<g opacity=".8"><path d="M810.1 132.5H814.5V125.6H816.7L812.3 120L807.9 125.6H810.1Z" stroke="#0a12d8" stroke-width="1.5" fill="none" stroke-linejoin="round"/></g>
<g opacity=".8"><path d="M962.1 399H966.5V392.7H968.7L964.3 387.5L959.9 392.7H962.1Z" stroke="#0a12d8" stroke-width="1.5" fill="none" stroke-linejoin="round"/></g>
<g opacity=".8"><path d="M1241.3 322.5H1245.7V315.6H1247.9L1243.5 310L1239.1 315.6H1241.3Z" stroke="#0a12d8" stroke-width="1.5" fill="none" stroke-linejoin="round"/></g>
<path d="M116.3 567.9V562.1M124.3 567.9V564.1M132.3 567.9V562.4M140.3 567.9V561.4M148.3 567.9V555.4M156.3 567.9V549.4M164.3 567.9V544.7M172.3 567.9V533.3M180.3 567.9V522.6M188.3 567.9V514.2M196.3 567.9V508.2M204.3 567.9V505.4M212.3 567.9V502.2M220.3 567.9V499.7M228.3 567.9V498.1M236.3 567.9V495.2M244.3 567.9V492M252.3 567.9V493.3M260.3 567.9V496.3M268.3 567.9V498.1M276.3 567.9V500.3M284.3 567.9V501.9M292.3 567.9V503.2M300.3 567.9V504.6M308.3 567.9V508.8M316.3 567.9V512.3M324.3 567.9V512.3M332.3 567.9V513.1M340.3 567.9V515M348.3 567.9V516.3M356.3 567.9V518M364.3 567.9V519.3M372.3 567.9V520.4M380.3 567.9V521.7M388.3 567.9V523.3M396.3 567.9V523.4M404.3 567.9V528.2M412.3 567.9V530.9M420.3 567.9V532.5M428.3 567.9V532.2M436.3 567.9V535.2M444.3 567.9V536.5M452.3 567.9V536.5M460.3 567.9V538.1M468.3 567.9V538.4M476.3 567.9V539.5M484.3 567.9V541.1M492.3 567.9V533.6M500.3 567.9V528.2M508.3 567.9V523.1M516.3 567.9V524.2M524.3 567.9V527.2M532.3 567.9V529M540.3 567.9V529M548.3 567.9V526.3M556.3 567.9V522.6M564.3 567.9V520.2M572.3 567.9V518.3M580.3 567.9V515.6M588.3 567.9V514M596.3 567.9V515.1M604.3 567.9V513.5M612.3 567.9V511.9M620.3 567.9V511.6M628.3 567.9V513.5M636.3 567.9V514.6M644.3 567.9V517.5M652.3 567.9V518.6M660.3 567.9V518.6M668.3 567.9V517M676.3 567.9V521.3M684.3 567.9V526.3M692.3 567.9V533.3M700.3 567.9V540.3M708.3 567.9V546.2M716.3 567.9V550.2M724.3 567.9V554.5M732.3 567.9V560.1M740.3 567.9V562.3M748.3 567.9V566.4M756.3 567.9V567.1M1252.3 567.9V563M1260.3 567.9V548.9M1268.3 567.9V538.2M1276.3 567.9V531.3M1284.3 567.9V528M1292.3 567.9V524.3M1300.3 567.9V521.1M1308.3 567.9V518.9M1316.3 567.9V517.3M1324.3 567.9V516M1332.3 567.9V516.1M1340.3 567.9V518.1M1348.3 567.9V518.5M1356.3 567.9V520.1M1364.3 567.9V522.6M1372.3 567.9V525.4M1380.3 567.9V528.4M1388.3 567.9V530.4M1396.3 567.9V534.2M1404.3 567.9V536.2M1412.3 567.9V536.2M1420.3 567.9V536.2M1428.3 567.9V536.4M1436.3 567.9V535M1444.3 567.9V536" stroke="#ff0000" stroke-width="3.2" fill="none"/>
<path d="M12.3 567.6V588M20.3 567.6V589.2M28.3 567.6V593.6M36.3 567.6V593.6M44.3 567.6V590.9M52.3 567.6V587.2M60.3 567.6V585.2M68.3 567.6V583.5M76.3 567.6V582.5M84.3 567.6V580.2M92.3 567.6V575.8M100.3 567.6V571.8M108.3 567.6V569.1M764.3 567.6V573.8M772.3 567.6V575.1M780.3 567.6V579.3M788.3 567.6V581.7M796.3 567.6V580.1M804.3 567.6V575.7M812.3 567.6V570.9M820.3 567.6V570.1M828.3 567.6V571.7M836.3 567.6V574.9M844.3 567.6V577.3M852.3 567.6V582.1M860.3 567.6V599M868.3 567.6V620.7M876.3 567.6V637.6M884.3 567.6V655.3M892.3 567.6V669.3M900.3 567.6V680.6M908.3 567.6V690.6M916.3 567.6V697.9M924.3 567.6V703.1M932.3 567.6V705.5M940.3 567.6V703.9M948.3 567.6V699.9M956.3 567.6V693.8M964.3 567.6V687M972.3 567.6V682.1M980.3 567.6V677.9M988.3 567.6V672.1M996.3 567.6V667.1M1004.3 567.6V658.2M1012.3 567.6V649.3M1020.3 567.6V642.5M1028.3 567.6V635.7M1036.3 567.6V629.3M1044.3 567.6V621.8M1052.3 567.6V613.2M1060.3 567.6V607.9M1068.3 567.6V604.6M1076.3 567.6V602.9M1084.3 567.6V601.4M1092.3 567.6V600M1100.3 567.6V597.9M1108.3 567.6V593.6M1116.3 567.6V592.1M1124.3 567.6V592.5M1132.3 567.6V587.1M1140.3 567.6V583.6M1148.3 567.6V578.9M1156.3 567.6V580M1164.3 567.6V578.4M1172.3 567.6V575.7M1180.3 567.6V573.7M1188.3 567.6V572M1196.3 567.6V575.7M1204.3 567.6V577.3M1212.3 567.6V584.4M1220.3 567.6V588.6M1228.3 567.6V587.3M1236.3 567.6V581.1M1244.3 567.6V573.1" stroke="#00b400" stroke-width="2.3" fill="none"/>
<polyline points="12.3,588 20.3,589.2 28.3,593.6 36.3,593.6 44.3,590.9 52.3,587.2 60.3,585.2 68.3,583.5 76.3,582.5 84.3,580.2 92.3,575.8 100.3,571.8 108.3,569.1 116.3,562.1 124.3,564.1 132.3,562.4 140.3,561.4 148.3,555.4 156.3,549.4 164.3,544.7 172.3,533.3 180.3,522.6 188.3,514.2 196.3,508.2 204.3,505.4 212.3,502.2 220.3,499.7 228.3,498.1 236.3,495.2 244.3,492 252.3,493.3 260.3,496.3 268.3,498.1 276.3,500.3 284.3,501.9 292.3,503.2 300.3,504.6 308.3,508.8 316.3,512.3 324.3,512.3 332.3,513.1 340.3,515 348.3,516.3 356.3,518 364.3,519.3 372.3,520.4 380.3,521.7 388.3,523.3 396.3,523.4 404.3,528.2 412.3,530.9 420.3,532.5 428.3,532.2 436.3,535.2 444.3,536.5 452.3,536.5 460.3,538.1 468.3,538.4 476.3,539.5 484.3,541.1 492.3,533.6 500.3,528.2 508.3,523.1 516.3,524.2 524.3,527.2 532.3,529 540.3,529 548.3,526.3 556.3,522.6 564.3,520.2 572.3,518.3 580.3,515.6 588.3,514 596.3,515.1 604.3,513.5 612.3,511.9 620.3,511.6 628.3,513.5 636.3,514.6 644.3,517.5 652.3,518.6 660.3,518.6 668.3,517 676.3,521.3 684.3,526.3 692.3,533.3 700.3,540.3 708.3,546.2 716.3,550.2 724.3,554.5 732.3,560.1 740.3,562.3 748.3,566.4 756.3,567.1 764.3,573.8 772.3,575.1 780.3,579.3 788.3,581.7 796.3,580.1 804.3,575.7 812.3,570.9 820.3,570.1 828.3,571.7 836.3,574.9 844.3,577.3 852.3,582.1 860.3,599 868.3,620.7 876.3,637.6 884.3,655.3 892.3,669.3 900.3,680.6 908.3,690.6 916.3,697.9 924.3,703.1 932.3,705.5 940.3,703.9 948.3,699.9 956.3,693.8 964.3,687 972.3,682.1 980.3,677.9 988.3,672.1 996.3,667.1 1004.3,658.2 1012.3,649.3 1020.3,642.5 1028.3,635.7 1036.3,629.3 1044.3,621.8 1052.3,613.2 1060.3,607.9 1068.3,604.6 1076.3,602.9 1084.3,601.4 1092.3,600 1100.3,597.9 1108.3,593.6 1116.3,592.1 1124.3,592.5 1132.3,587.1 1140.3,583.6 1148.3,578.9 1156.3,580 1164.3,578.4 1172.3,575.7 1180.3,573.7 1188.3,572 1196.3,575.7 1204.3,577.3 1212.3,584.4 1220.3,588.6 1228.3,587.3 1236.3,581.1 1244.3,573.1 1252.3,563 1260.3,548.9 1268.3,538.2 1276.3,531.3 1284.3,528 1292.3,524.3 1300.3,521.1 1308.3,518.9 1316.3,517.3 1324.3,516 1332.3,516.1 1340.3,518.1 1348.3,518.5 1356.3,520.1 1364.3,522.6 1372.3,525.4 1380.3,528.4 1388.3,530.4 1396.3,534.2 1404.3,536.2 1412.3,536.2 1420.3,536.2 1428.3,536.4 1436.3,535 1444.3,536" stroke="#9a8e00" stroke-width="1.4" fill="none" stroke-linejoin="round"/>
<polyline points="12.4,569.8 20.4,574.8 28.3,579.2 36.3,582.8 44.3,584.9 52.4,585.9 60.4,586.2 68.3,587.5 76.3,587.9 84.3,587.2 92.4,585.5 100.4,583.5 108.5,580.8 116.3,577.8 124.4,574.8 132.4,572.8 140.4,570.8 148.3,566.8 156.3,562.4 164.4,558.1 172.4,553 180.4,548 188.3,542.3 196.3,536.3 204.4,530.9 212.3,526.3 220.4,519.8 228.3,513.7 236.3,508 244.3,504 252.2,500.8 260.3,498.7 268.3,498.4 275,497.6 280.4,496.3 284.3,496.5 292.3,497.3 300.3,497.9 308.2,500 316.3,502.2 324.3,504 332.4,505.9 340.3,508.3 348.3,509.7 356.3,511.8 364.2,513.9 372.3,515.8 380.3,516.6 388.3,517.7 396.2,519 404.3,521.3 412.4,523.1 420.3,524.7 428.3,525 436.3,527.2 444.2,529.3 452.3,531.2 460.3,532.2 468.4,534.7 476.3,535.7 484.3,536 492.3,536 500.2,536 508.3,535.7 516.3,533 524.4,532.2 532.3,531.4 540.3,530.6 548.3,529.8 556.2,526.9 564.3,524.2 572.3,523.7 580.3,523.4 588.2,522.9 596.3,522.1 604.4,518.8 612.3,516.4 620.3,516.2 628.3,515.6 636.2,515.1 640.3,513.5 644.3,513.5 652.3,514 660.4,515.1 668.3,515.4 676.3,516.2 684.3,516.7 692.2,519.9 700.3,523.1 708.3,526.3 716.4,530.6 724.3,534.7 732.3,539.2 740.3,544.3 748.2,549.1 756.3,552.9 764.3,557.7 772.3,560.6 780.2,564.4 788.3,569.3 796.3,571.7 804.3,573.7 812.4,574.9 820.2,575.7 828.2,575.7 836.3,575.7 844.3,576.1 852.3,576.9 860.4,580.1 868.4,584.2 876.2,590.2 884.3,600.2 892.3,610.3 900.3,622.3 908.4,634.4 916.2,647.2 924.3,661.7 932.3,674.5 940.3,684.2 948.4,690.6 956.2,694.6 964.2,695.8 972.3,696.1 980.3,695.7 988.4,692.5 996.2,688.6 1004.2,683.6 1012.3,677.5 1020.3,671.1 1028.4,664.3 1036.2,657.9 1044.2,651.1 1052.3,643.9 1060.3,636.4 1068.4,629.3 1076.2,622.9 1084.2,617.5 1092.3,612.9 1100.3,608.9 1108.4,605 1116.2,602.1 1124.2,599.3 1132.3,597.1 1140.3,594.3 1148.4,592.1 1156.2,589.3 1164.2,587.5 1172.3,585.4 1180.4,582.4 1188.3,580 1196.3,577.9 1200.2,577.1 1204.3,577.9 1212.2,578.1 1220.3,578.4 1228.3,578.7 1236.4,578.7 1244.3,578.9 1252.3,578.1 1260.3,575.2 1268.2,571.4 1276.3,566.4 1284.3,560.2 1292.4,552.7 1300.3,546.3 1308.3,539.8 1316.3,533.1 1324.2,527.8 1332.3,523.7 1336,522 1340.3,520.3 1348.3,520.1 1356.3,519.7 1360.1,518.9 1364.3,518.7 1372.3,519.1 1380.3,520.3 1388.3,521.1 1396.3,522.8 1404.3,525.8 1412.3,528 1420.3,530 1428.3,531.4 1436.3,533.6 1444.3,534" stroke="#ffffff" stroke-width="2.6" fill="none" stroke-linejoin="round" stroke-linecap="round"/>
<path d="M60.4 598.3V587.5M55.8 591.7L60.4 586.7L65 591.7" stroke="#ffff00" stroke-width="2.9" fill="none" stroke-linejoin="miter" stroke-linecap="butt"/>
<path d="M491.8 538.3V526.2M487.2 530.4L491.8 525.4L496.4 530.4" stroke="#ffff00" stroke-width="2.9" fill="none" stroke-linejoin="miter" stroke-linecap="butt"/>
<path d="M812.2 584V572M807.6 576.2L812.2 571.2L816.8 576.2" stroke="#ffff00" stroke-width="2.9" fill="none" stroke-linejoin="miter" stroke-linecap="butt"/>
<path d="M963.8 730.5V718.3M959.2 722.5L963.8 717.5L968.4 722.5" stroke="#ffff00" stroke-width="2.9" fill="none" stroke-linejoin="miter" stroke-linecap="butt"/>
<path d="M1243.7 589.8V577.7M1239.1 581.9L1243.7 576.9L1248.3 581.9" stroke="#ffff00" stroke-width="2.9" fill="none" stroke-linejoin="miter" stroke-linecap="butt"/>
<path d="M268.6 476V487.4M264 483.2L268.6 488.2L273.2 483.2" stroke="#00f0ff" stroke-width="2.9" fill="none" stroke-linejoin="miter" stroke-linecap="butt"/>
<path d="M636.2 494.7V506.8M631.6 502.6L636.2 507.6L640.8 502.6" stroke="#00f0ff" stroke-width="2.9" fill="none" stroke-linejoin="miter" stroke-linecap="butt"/>
<path d="M844.3 573V584M839.7 579.8L844.3 584.8L848.9 579.8" stroke="#00f0ff" stroke-width="2.9" fill="none" stroke-linejoin="miter" stroke-linecap="butt"/>
<path d="M1212.2 580.4V591.1M1207.6 586.9L1212.2 591.9L1216.8 586.9" stroke="#00f0ff" stroke-width="2.9" fill="none" stroke-linejoin="miter" stroke-linecap="butt"/>
<path d="M1356.2 502V513.3M1351.6 509.1L1356.2 514.1L1360.8 509.1" stroke="#00f0ff" stroke-width="2.9" fill="none" stroke-linejoin="miter" stroke-linecap="butt"/>
<g stroke="#b4b4b4" stroke-width="1.8" fill="none"><path d="M11.6 52V735.4"/><path d="M10.8 52.8H1469.6"/><path d="M10.8 734.6H1469.6"/></g>
<rect x="1467.4" y="51.5" width="2.4" height="684" fill="#b4b4b4"/>
<rect x="11.5" y="468.5" width="1458" height="3.7" fill="#c2c2c2"/>
<path d="M1469 58.5H1472.5M1469 107.5H1472.5M1469 156.5H1472.5M1469 205.5H1472.5M1469 254.5H1472.5M1469 303.5H1472.5M1469 352.5H1472.5M1469 401.5H1472.5M1469 450.5H1472.5M1469 568H1472.5M1469 726.5H1472.5M12.3 735V738.5M108.3 735V738.5M204.3 735V738.5M300.3 735V738.5M396.3 735V738.5M492.3 735V738.5M588.3 735V738.5M684.3 735V738.5M780.3 735V738.5M876.3 735V738.5M972.3 735V738.5M1068.3 735V738.5M1164.3 735V738.5M1260.3 735V738.5M1356.3 735V738.5" stroke="#d8d8d8" stroke-width="1.4" fill="none"/>
<g fill="#f4f4f4" font-size="13px" stroke="#f4f4f4" stroke-width=".25">
<text x="1476" y="63.4" textLength="44.8" lengthAdjust="spacingAndGlyphs">1833.05</text>
<text x="1476" y="112.4" textLength="44.8" lengthAdjust="spacingAndGlyphs">1828.55</text>
<text x="1476" y="161.4" textLength="44.8" lengthAdjust="spacingAndGlyphs">1824.00</text>
<text x="1476" y="210.4" textLength="44.8" lengthAdjust="spacingAndGlyphs">1819.50</text>
<text x="1476" y="259.9" textLength="44.8" lengthAdjust="spacingAndGlyphs">1814.95</text>
<text x="1476" y="308.4" textLength="44.8" lengthAdjust="spacingAndGlyphs">1810.45</text>
<text x="1476" y="357.4" textLength="44.8" lengthAdjust="spacingAndGlyphs">1805.95</text>
<text x="1476" y="406.4" textLength="44.8" lengthAdjust="spacingAndGlyphs">1801.40</text>
<text x="1476" y="455.4" textLength="44.8" lengthAdjust="spacingAndGlyphs">1796.90</text>
<text x="1472" y="485.3" textLength="38" lengthAdjust="spacingAndGlyphs">4.7254</text>
<text x="1472.2" y="573.3" textLength="24.8" lengthAdjust="spacingAndGlyphs">0.00</text>
<text x="1472.6" y="731.2" textLength="42" lengthAdjust="spacingAndGlyphs">-8.1574</text>
<text x="11.2" y="750.3" textLength="69.6" lengthAdjust="spacingAndGlyphs">30 Dec 2021</text>
<text x="107.2" y="750.3" textLength="74.3" lengthAdjust="spacingAndGlyphs">30 Dec 14:00</text>
<text x="203.2" y="750.3" textLength="74.3" lengthAdjust="spacingAndGlyphs">30 Dec 20:00</text>
<text x="299.2" y="750.3" textLength="74.3" lengthAdjust="spacingAndGlyphs">31 Dec 03:00</text>
<text x="395.2" y="750.3" textLength="74.3" lengthAdjust="spacingAndGlyphs">31 Dec 09:00</text>
<text x="491.2" y="750.3" textLength="74.3" lengthAdjust="spacingAndGlyphs">31 Dec 15:00</text>
<text x="587.2" y="750.3" textLength="74.3" lengthAdjust="spacingAndGlyphs">31 Dec 21:00</text>
<text x="683.2" y="750.3" textLength="64.5" lengthAdjust="spacingAndGlyphs">3 Jan 04:00</text>
<text x="779.2" y="750.3" textLength="64.5" lengthAdjust="spacingAndGlyphs">3 Jan 10:00</text>
<text x="875.2" y="750.3" textLength="64.5" lengthAdjust="spacingAndGlyphs">3 Jan 16:00</text>
<text x="971.2" y="750.3" textLength="64.5" lengthAdjust="spacingAndGlyphs">3 Jan 22:00</text>
<text x="1067.2" y="750.3" textLength="64.5" lengthAdjust="spacingAndGlyphs">4 Jan 05:00</text>
<text x="1163.2" y="750.3" textLength="64.5" lengthAdjust="spacingAndGlyphs">4 Jan 11:00</text>
<text x="1259.2" y="750.3" textLength="64.5" lengthAdjust="spacingAndGlyphs">4 Jan 17:00</text>
<text x="1355.2" y="750.3" textLength="64.5" lengthAdjust="spacingAndGlyphs">4 Jan 23:00</text>
<text x="30" y="67.2" textLength="72.3" lengthAdjust="spacingAndGlyphs">XAUUSD,M30</text>
<text x="111.2" y="67.2" textLength="196" lengthAdjust="spacingAndGlyphs">1816.21 1816.36 1815.62 1815.66</text>
<text x="16" y="487.3" textLength="257" lengthAdjust="spacingAndGlyphs">MACD(12,26,9) 1.6019 1.6885 1.6019 0.0000</text>
</g>
<path d="M14.8 59.7h9.4l-4.7 5.4z" fill="#fff"/>
<rect x="1469.6" y="240.2" width="53" height="13.8" fill="#fff"/>
<text x="1476" y="252" font-size="13px" fill="#000" textLength="44.8" lengthAdjust="spacingAndGlyphs">1815.66</text>
</svg>
<!-- chart tabs -->
<div class="abs" style="left:0;top:758px;width:1522px;height:32px;background:#f0f0f0"></div>
<div class="abs" style="left:0;top:759px;width:1522px;height:2px;background:#6a6a6a"></div>
<div class="abs" style="left:0;top:48px;width:8px;height:736px;background:linear-gradient(90deg,#ececec 0,#ececec 3.5px,#fdfdfd 4.5px,#fdfdfd 8px)"></div>
<div class="abs" style="left:0;top:47px;width:8px;height:1.5px;background:#c4c4c4"></div>
<div class="abs" style="left:7.3px;top:758px;width:1.4px;height:26px;background:#555"></div>
<div class="abs" style="left:0;top:783px;width:8px;height:1.4px;background:#777"></div>
<div class="tab" style="left:27px">AUDUSD,H1</div><div class="tsep" style="left:130px"></div>
<div class="tab" style="left:144px">USDCAD,M5</div><div class="tsep" style="left:250px"></div>
<div class="tab" style="left:264px">NZDUSD,M5</div><div class="tsep" style="left:370px"></div>
<div class="tab" style="left:383px">USDCHF,M15</div><div class="tsep" style="left:495px"></div>
<div class="tab" style="left:508px">EURUSD,M1</div><div class="tsep" style="left:610px"></div>
<div class="tab" style="left:623px">GBPUSD,M5</div><div class="tsep" style="left:727px"></div>
<div class="tab" style="left:740px">XAUUSD,M5</div>
<div class="abs" style="left:846px;top:760px;width:129px;height:25px;background:#d6eed9;border:1.5px solid #222;border-bottom-width:2px;border-top:none;box-sizing:border-box"></div>
<div class="tab" style="left:860px;color:#111;-webkit-text-stroke:.45px #111">XAUUSD,M30</div>
<svg class="abs" style="left:1490px;top:764px" width="32" height="12" viewBox="0 0 32 12"><path d="M8 2.5v7l-4-3.5zM27 2.5v7l4-3.5z" fill="#a0a0a0"/></svg>
<div class="abs" style="left:0;top:789px;width:1522px;height:1px;background:#d5d5d5"></div>
<!-- terminal header -->
<div class="abs" style="left:0;top:790px;width:1522px;height:27px;background:#fff"></div>
<div class="hd" style="left:100px;width:89px">时间</div><div class="hsep" style="left:194px"></div>
<div class="hd" style="left:219px;width:89px">类型</div><div class="hsep" style="left:313px"></div>
<div class="hd" style="left:312px;width:89px">手数</div><div class="hsep" style="left:406px"></div>
<div class="hd" style="left:431px;width:89px">交易品种</div><div class="hsep" style="left:525px"></div>
<div class="hd" style="left:564px;width:89px">价格</div><div class="hsep" style="left:658px"></div>
<div class="hd" style="left:697px;width:89px">止损</div><div class="hsep" style="left:791px"></div>
<div class="hd" style="left:830px;width:89px">止盈</div><div class="hsep" style="left:924px"></div>
<div class="hd" style="left:962px;width:89px">价格</div><div class="hsep" style="left:1057px"></div>
<div class="hd" style="left:1095px;width:89px">手续费</div><div class="hsep" style="left:1190px"></div>
<div class="hd" style="left:1228px;width:89px">库存费</div><div class="hsep" style="left:1323px"></div>
<div class="hd" style="left:1432px;width:89px">获利</div>
<!-- balance row -->
<div class="abs" style="left:0;top:817px;width:1522px;height:25px;background:#c8c8c8"></div>
<div class="abs" style="left:2px;top:817.5px;font-size:15px;font-weight:bold;color:#111;white-space:nowrap;letter-spacing:.28px">49 058.81&nbsp; 可用预付款: 49 058.81</div>
<div class="abs" style="right:0px;top:817.5px;font-size:15px;font-weight:bold;color:#111;white-space:nowrap">0.00</div>
<!-- green empty area -->
<div class="abs" style="left:0;top:842px;width:1522px;height:54px;background:#cce8cf"></div>
<div class="abs" style="left:1393px;top:844px;font-size:40px;font-weight:900;color:#908a92;white-space:nowrap;letter-spacing:-1px">指标铺</div>
<svg class="abs" style="left:1412px;top:869.5px" width="110" height="26.5" viewBox="1412 869.5 110 26.5"><rect x="1412" y="869.5" width="110" height="27" fill="#f97e1c"/><g transform="translate(1412.5 870.7) scale(1.138)"><g><rect x="0" y="0" width="21.7" height="21.3" rx="5" fill="#f4501a"/><circle cx="10.8" cy="2.5" r="1.25" fill="#fff"/><rect x="10.2" y="3" width="1.2" height="3.5" fill="#fff"/><path d="M10.8 5.6C16.5 5.6 20.1 8.6 20.1 11.9C20.1 15 17 17.6 13.3 18.1L10.8 19.6L8.3 18.1C4.6 17.6 1.5 15 1.5 11.9C1.5 8.6 5.1 5.6 10.8 5.6Z" fill="#fff"/><rect x="5.1" y="9.1" width="11.8" height="5.9" rx="2.95" fill="#f23a12"/><circle cx="8.5" cy="12.1" r="1.1" fill="#fff"/><circle cx="13.5" cy="12.1" r="1.1" fill="#fff"/><defs><linearGradient id="lg2" x1="0" y1="1" x2="1" y2="0"><stop offset="0" stop-color="#111"/><stop offset=".45" stop-color="#3a1404"/><stop offset=".6" stop-color="#e8480c"/><stop offset="1" stop-color="#f0560e"/></linearGradient></defs><text x="27.3" y="17.4" font-size="19px" fill="#0d0d0d" stroke="#0d0d0d" stroke-width=".8" textLength="66.8" lengthAdjust="spacingAndGlyphs" font-family="Liberation Sans, sans-serif">EAM<tspan fill="url(#lg2)" stroke="url(#lg2)">O</tspan>L</text></g></g></svg>

</div></body></html>
